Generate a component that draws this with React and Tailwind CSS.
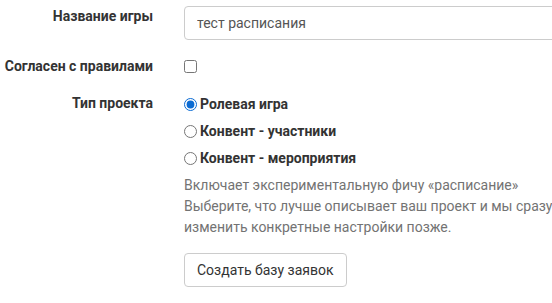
import React from 'react';

const labelCls = 'w-[169px] shrink-0 pr-[16px] text-right font-bold leading-5 text-[#333] whitespace-nowrap';

function RadioOption({ name, label, checked }) {
  return (
    <label className="flex items-center gap-[3px] leading-5 font-bold text-[#333] whitespace-nowrap">
      <input
        type="radio"
        name={name}
        defaultChecked={checked}
        className="m-0 h-[13px] w-[13px] accent-[#0b6bd3]"
      />
      {label}
    </label>
  );
}

export default function App() {
  return (
    <div
      className="w-[552px] h-[303px] overflow-hidden bg-white text-[14px]"
      style={{ fontFamily: 'Roboto, "Liberation Sans", sans-serif' }}
    >
      {/* game name */}
      <div className="flex mt-[6px]">
        <div className={labelCls}>Название игры</div>
        <div className="pl-[15px] shrink-0">
          <input
            className="h-[34px] w-[420px] rounded border border-[#ccc] px-3 text-[#555] outline-none"
            defaultValue="тест расписания"
          />
        </div>
      </div>

      {/* rules */}
      <div className="flex mt-[16px]">
        <div className={labelCls}>Согласен с правилами</div>
        <div className="pl-[15px] pt-[4px]">
          <input type="checkbox" className="m-0 block h-[13px] w-[13px]" />
        </div>
      </div>

      {/* project type */}
      <div className="flex mt-[17px]">
        <div className={labelCls}>Тип проекта</div>
        <div className="pl-[15px] pt-[1px] shrink-0">
          <div className="flex flex-col gap-[7px]">
            <RadioOption name="kind" label="Ролевая игра" checked />
            <RadioOption name="kind" label="Конвент - участники" />
            <RadioOption name="kind" label="Конвент - мероприятия" />
          </div>
          <p className="mt-[7px] leading-[21px] text-[#737373] whitespace-nowrap">
            Включает экспериментальную фичу «расписание»
            <br />
            Выберите, что лучше описывает ваш проект и мы сразу настроим его. Вы сможете
            <br />
            изменить конкретные настройки позже.
          </p>
          <button
            type="button"
            className="mt-[15px] h-[34px] rounded border border-[#ccc] bg-white px-3 text-[#333]"
          >
            Создать базу заявок
          </button>
        </div>
      </div>
    </div>
  );
}
